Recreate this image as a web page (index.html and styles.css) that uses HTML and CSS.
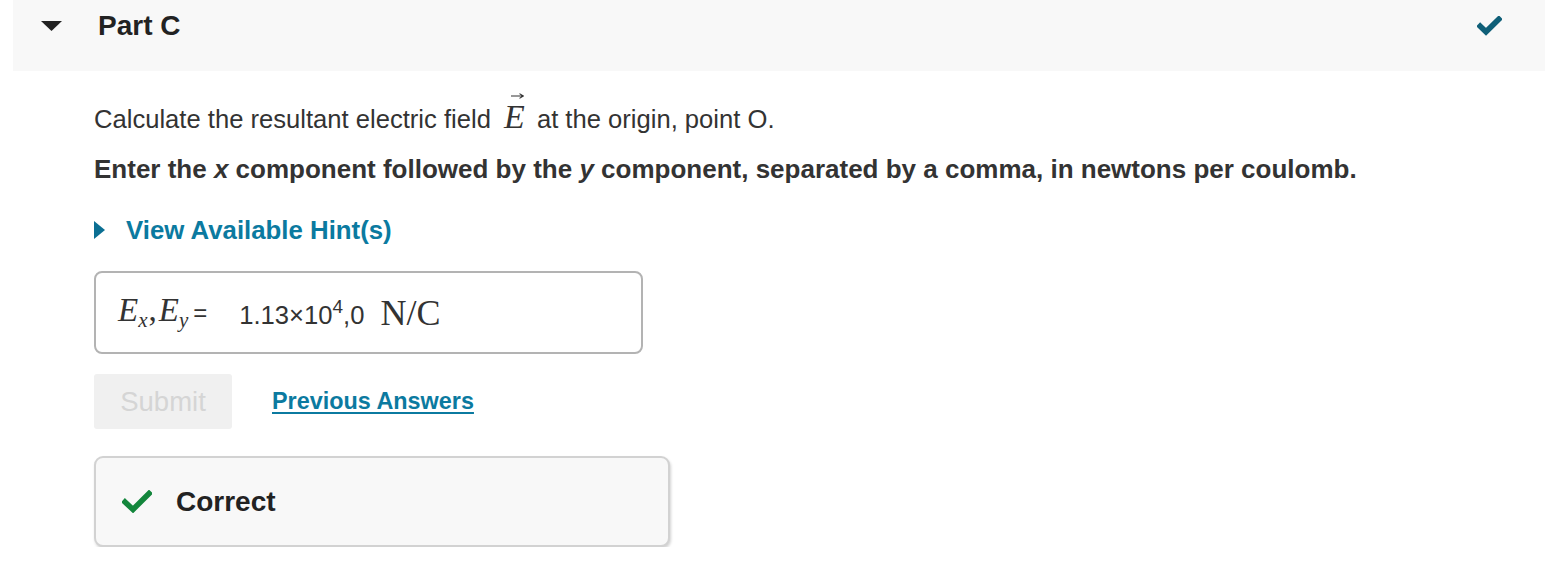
FILE: index.html
```html
<!DOCTYPE html>
<html lang="en">
<head>
    <meta charset="UTF-8">
    <title>Part C</title>
    <link rel="stylesheet" href="styles.css">
</head>
<body>
    <div class="part">
        <div class="part-head">
            <svg class="toggle" width="21" height="10" viewBox="0 0 21 10"><path d="M0 0 H21 L10.5 10 Z" fill="#222"/></svg>
            <span class="part-title">Part C</span>
            <svg class="done" width="25" height="20" viewBox="0 0 25 20"><path d="M3.2 10.2 L9 15.8 L21.8 3.2" fill="none" stroke="#0f5f78" stroke-width="5.6" stroke-linecap="square"/></svg>
        </div>

        <div class="part-body">
            <p class="question">Calculate the resultant electric field <span class="math vec">E<svg class="arrow" width="13" height="6" viewBox="0 0 13 6"><path d="M0 3 H11.5 M8.5 0.6 L12.2 3 L8.5 5.4" fill="none" stroke="#333" stroke-width="1.1"/></svg></span> at the origin, point O.</p>
            <p class="instructions">Enter the <em>x</em> component followed by the <em>y</em> component, separated by a comma, in newtons per coulomb.</p>

            <a class="hint" href="#">
                <svg width="11" height="18" viewBox="0 0 11 18"><path d="M0 0 L11 9 L0 18 Z" fill="#0b6f93"/></svg>
                <span>View Available Hint(s)</span>
            </a>

            <div class="answer">
                <span class="math">E<sub>x</sub><span class="comma">,</span>E<sub>y</sub></span>
                <span class="eq">=</span>
                <span class="value">1.13×10<sup>4</sup>,0</span>
                <span class="math unit">N/C</span>
            </div>

            <div class="actions">
                <button class="submit" disabled>Submit</button>
                <a class="prev" href="#">Previous Answers</a>
            </div>

            <div class="feedback">
                <svg width="30" height="23" viewBox="0 0 30 23"><path d="M3 12 L11 19.5 L27 3.5" fill="none" stroke="#13863c" stroke-width="5.5" stroke-linecap="square"/></svg>
                <span>Correct</span>
            </div>
        </div>
    </div>
</body>
</html>
```

FILE: styles.css
```css
body { margin: 0; font-family: "Liberation Sans", Arial, sans-serif; color: #333; background: #fff; }
.part { margin: 0 19px 0 13px; }
.part-head { height: 71px; box-sizing: border-box; background: #f8f8f8; display: flex; align-items: center; padding: 0 43px 19px 28px; }
.toggle { margin-right: 36px; }
.part-title { flex: 1; font-size: 28px; font-weight: bold; color: #222; }
.part-body { padding: 29px 0 0 81px; }
.question, .instructions { margin: 0; font-size: 25.6px; line-height: 36px; }
.question { height: 36px; }
.instructions { margin-top: 15px; font-size: 26px; font-weight: bold; }
.math { font-family: "Liberation Serif", "Times New Roman", serif; font-style: italic; font-size: 33px; line-height: 1; }
.vec { position: relative; display: inline-block; font-size: 34px; margin: 0 5px 0 6px; }
.vec .arrow { position: absolute; left: 7px; top: -7px; }
.hint { display: flex; align-items: center; gap: 21px; margin-top: 25px; height: 36px; font-size: 25.8px; font-weight: bold; color: #0b7aa0; text-decoration: none; }
.answer { margin-top: 23px; width: 549px; height: 83px; box-sizing: border-box; border: 2px solid #b3b3b3; border-radius: 8px; display: flex; align-items: center; padding: 0 0 0 22px; font-size: 25.6px; color: #333; }
.answer sub { font-size: 21px; vertical-align: -6px; }
.answer .comma { font-style: normal; margin: 0 2px 0 1px; }
.eq { margin: 0 32px 0 5px; font-size: 24px; }
.value sup { font-size: 19px; vertical-align: 11px; }
.unit { font-style: normal; font-size: 36px; margin-left: 16px; }
.actions { display: flex; align-items: center; gap: 40px; margin-top: 20px; }
.submit { width: 138px; height: 55px; border: none; border-radius: 3px; background: #f0f0f0; color: #d5d5d5; font-family: inherit; font-size: 27.5px; padding: 0; }
.prev { font-size: 23.4px; font-weight: bold; color: #0b7aa0; text-decoration: underline; text-underline-offset: 3px; }
.feedback { margin-top: 27px; width: 576px; height: 91px; box-sizing: border-box; border: 2px solid #d2d2d2; border-radius: 9px; background: #f8f8f8; box-shadow: 1px 2px 3px rgba(0,0,0,0.18); display: flex; align-items: center; gap: 24px; padding-left: 26px; font-size: 28px; font-weight: bold; color: #222; }
```
